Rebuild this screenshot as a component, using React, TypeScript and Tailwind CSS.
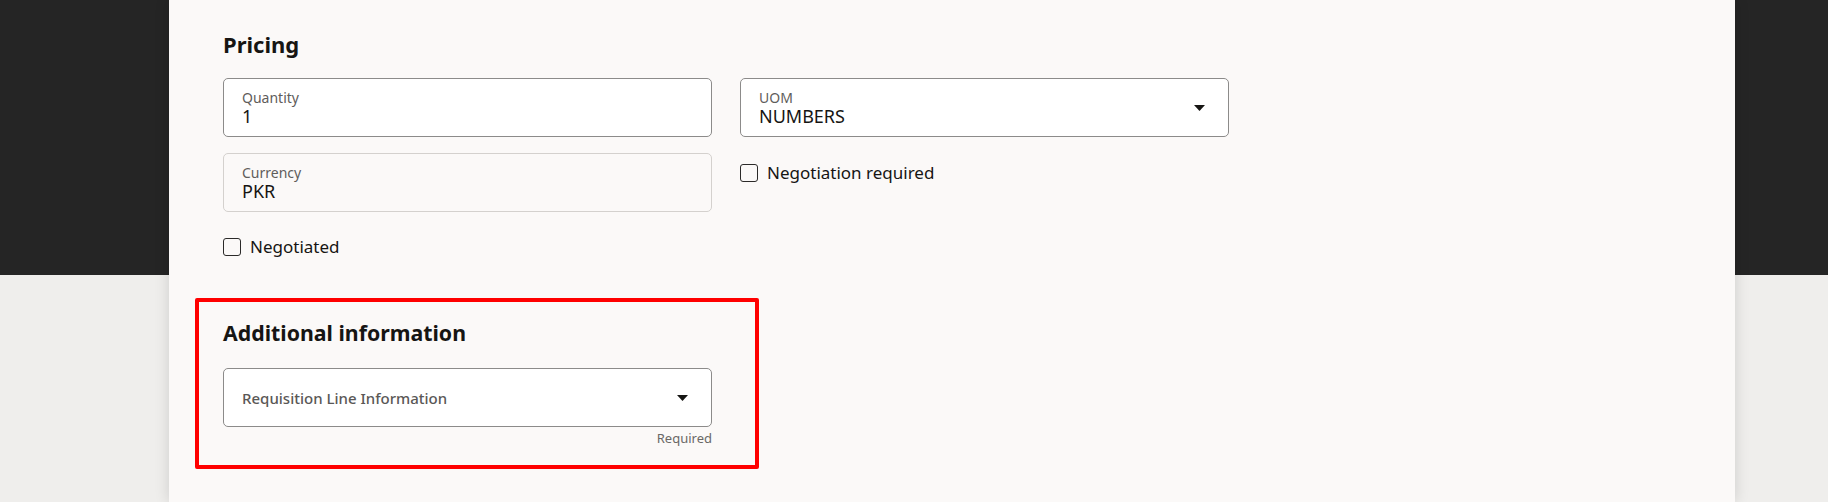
import React from "react";

const font = { fontFamily: '"Noto Sans", "Open Sans", sans-serif' };

function Caret() {
  return (
    <svg width="11" height="6" viewBox="0 0 11 6" className="shrink-0">
      <path d="M0 0 H11 L5.5 6 Z" fill="#161513" />
    </svg>
  );
}

function Field({
  label,
  value,
  readOnly,
  select,
}: {
  label: string;
  value: string;
  readOnly?: boolean;
  select?: boolean;
}) {
  return (
    <div
      className={
        "flex h-[59px] items-center rounded-[5px] border pl-[18px] pr-[23px] " +
        (readOnly ? "border-[#d4d1ce] bg-[#fbf9f8]" : "border-[#8c8b8a] bg-white")
      }
    >
      <div className="flex flex-1 flex-col pt-[1px]">
        <span className="text-[14px] leading-[16px] text-[#5f5d5b]">{label}</span>
        <span className="text-[18px] leading-[21px] text-[#161513]">{value}</span>
      </div>
      {select && <Caret />}
    </div>
  );
}

function Check({ label }: { label: string }) {
  return (
    <div className="flex h-[38px] items-center gap-[9px]">
      <span className="h-[18px] w-[18px] shrink-0 rounded-[3px] border-[1.5px] border-[#2b2a29] bg-[#fbf9f8]" />
      <span className="text-[17px] leading-[22px] text-[#161513]">{label}</span>
    </div>
  );
}

export default function App() {
  return (
    <div
      className="h-[502px] w-[1828px] overflow-hidden bg-[linear-gradient(to_bottom,#252525_275px,#efeeec_275px)]"
      style={font}
    >
      <div className="ml-[169px] h-[502px] w-[1566px] bg-[#fbf9f8] pl-[54px] pt-[30px] shadow-[0_0_14px_rgba(0,0,0,0.14)]">
        <h2 className="text-[22px] font-bold leading-[28px] text-[#161513]">Pricing</h2>
        <div className="mt-[20px] grid w-[1007px] grid-cols-[489px_489px] gap-x-[28px]">
          <div className="flex flex-col">
            <Field label="Quantity" value="1" />
            <div className="mt-[16px]">
              <Field label="Currency" value="PKR" readOnly />
            </div>
            <div className="mt-[16px]">
              <Check label="Negotiated" />
            </div>
          </div>
          <div className="flex flex-col">
            <Field label="UOM" value="NUMBERS" select />
            <div className="mt-[17px]">
              <Check label="Negotiation required" />
            </div>
          </div>
        </div>

        <div className="ml-[-28px] mt-[32px] w-[564px] rounded-[2px] border-4 border-[#ff0000] pb-[19px] pl-[24px] pt-[17px]">
          <h2 className="text-[21.3px] font-bold leading-[28px] text-[#161513]">Additional information</h2>
          <div className="mt-[21px] w-[489px]">
            <div className="flex h-[59px] items-center rounded-[5px] border border-[#8c8b8a] bg-white pl-[18px] pr-[23px]">
              <span className="flex-1 text-[15px] font-medium leading-[20px] text-[#5a5856]">
                Requisition Line Information
              </span>
              <Caret />
            </div>
            <div className="mt-[3px] text-right text-[13px] leading-[16px] text-[#6a6866]">Required</div>
          </div>
        </div>
      </div>
    </div>
  );
}
